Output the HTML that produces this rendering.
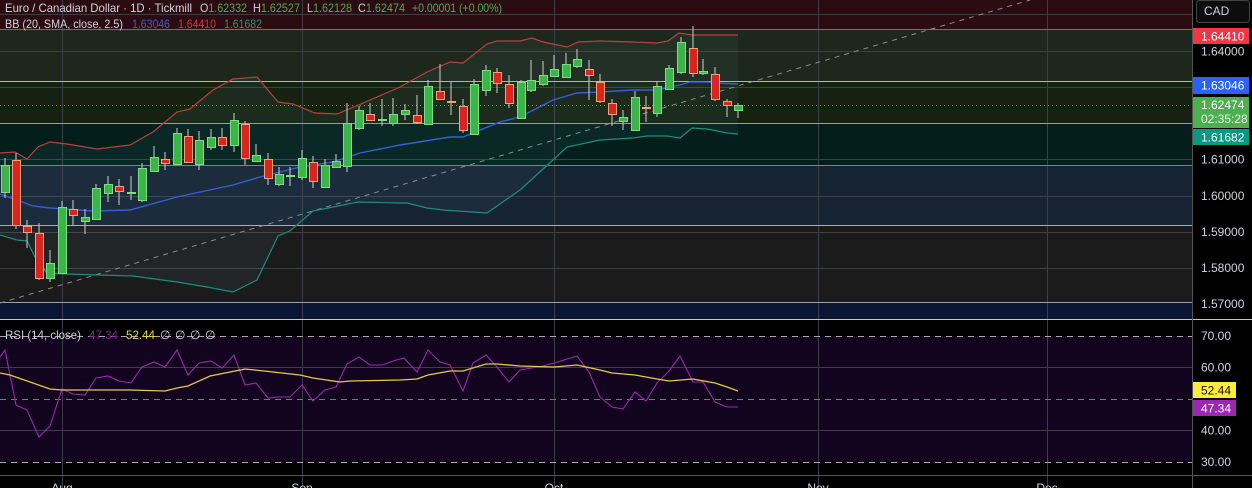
<!DOCTYPE html>
<html><head><meta charset="utf-8"><style>
html,body{margin:0;padding:0;background:#000;width:1252px;height:488px;overflow:hidden;font-family:"Liberation Sans",sans-serif}
svg{position:absolute;left:0;top:0}
</style></head><body>
<svg width="1252" height="488" viewBox="0 0 1252 488" xmlns="http://www.w3.org/2000/svg" font-family="Liberation Sans, sans-serif">
<rect x="0" y="0" width="1192" height="29" fill="#2a0c12"/>
<rect x="0" y="29" width="1192" height="52" fill="#1d271b"/>
<rect x="0" y="81" width="1192" height="42" fill="#162112"/>
<rect x="0" y="123" width="1192" height="42" fill="#031e1b"/>
<rect x="0" y="165" width="1192" height="60" fill="#162333"/>
<rect x="0" y="225" width="1192" height="77" fill="#1b1b1c"/>
<rect x="0" y="302" width="1192" height="17" fill="#0b1634"/>
<rect x="0" y="336" width="1192" height="126" fill="#12041e"/>
<g stroke="#3c3f46" stroke-width="1">
<line x1="0" y1="14.5" x2="1192" y2="14.5"/><line x1="0" y1="51.5" x2="1192" y2="51.5"/>
<line x1="0" y1="87.5" x2="1192" y2="87.5"/><line x1="0" y1="159.5" x2="1192" y2="159.5"/>
<line x1="0" y1="196.5" x2="1192" y2="196.5"/><line x1="0" y1="232.5" x2="1192" y2="232.5"/>
<line x1="0" y1="268.5" x2="1192" y2="268.5"/>
<line x1="62.5" y1="0" x2="62.5" y2="488"/><line x1="302.5" y1="0" x2="302.5" y2="488"/>
<line x1="554.5" y1="0" x2="554.5" y2="488"/><line x1="818.5" y1="0" x2="818.5" y2="488"/>
<line x1="1047.5" y1="0" x2="1047.5" y2="488"/>
<line x1="0" y1="367.5" x2="1192" y2="367.5"/><line x1="0" y1="430.5" x2="1192" y2="430.5"/>
</g>
<polygon fill="rgba(140,210,220,0.06)" points="0,153 15,152 27,159 38,147 50,142 67,144 97,149 130,145 153,132 177,112 190,109 213,90 233,79 257,77 278,102 293,104 315,113 337,114 370,100 400,87 427,72 450,62 463,63 487,44 497,41 520,41 532,38 543,42 567,47 578,42 600,41 633,42 657,43 668,41 679,33 692,35 738,35 738,134 727,133 707,129 692,128 680,138 667,136 647,136 633,138 600,140 567,147 553,160 520,190 487,213 443,210 427,208 407,203 400,203 358,202 313,211 290,231 278,236 257,280 233,292 207,287 177,282 133,276 67,274 47,273 35,257 27,241 17,240 0,235"/>
<line x1="0" y1="29.5" x2="1192" y2="29.5" stroke="#e0404a"/>
<line x1="0" y1="81.5" x2="1192" y2="81.5" stroke="#8fd17a"/>
<line x1="0" y1="123.5" x2="1192" y2="123.5" stroke="#6cc060"/>
<line x1="0" y1="165.5" x2="1192" y2="165.5" stroke="#2ea88f"/>
<line x1="0" y1="225.5" x2="1192" y2="225.5" stroke="#7fb6f0"/>
<line x1="0" y1="302.5" x2="1192" y2="302.5" stroke="#9aa2b8"/>
<line x1="0" y1="105.5" x2="1192" y2="105.5" stroke="#4caf50" stroke-dasharray="1,3"/>
<line x1="0" y1="303" x2="1030" y2="0" stroke="#8a8a8a" stroke-dasharray="5,5"/>
<polyline fill="none" stroke="#b8413f" stroke-width="1.2" points="0,153 15,152 27,159 38,147 50,142 67,144 97,149 130,145 153,132 177,112 190,109 213,90 233,79 257,77 278,102 293,104 315,113 337,114 370,100 400,87 427,72 450,62 463,63 487,44 497,41 520,41 532,38 543,42 567,47 578,42 600,41 633,42 657,43 668,41 679,33 692,35 738,35"/>
<polyline fill="none" stroke="#2f62d8" stroke-width="1.4" points="0,194 17,200 33,206 50,208 93,211 130,210 177,197 233,185 260,177 300,167 333,162 360,153 400,145 450,137 463,137 500,122 520,117 553,100 577,93 600,92 633,90 657,90 680,85 690,82 707,82 717,83 738,84"/>
<polyline fill="none" stroke="#1a8f7a" stroke-width="1.2" points="0,235 17,240 27,241 35,257 47,273 67,274 133,276 177,282 207,287 233,292 257,280 278,236 290,231 313,211 358,202 400,203 407,203 427,208 443,210 487,213 520,190 553,160 567,147 600,140 633,138 647,136 667,136 680,138 692,128 707,129 727,133 738,134"/>
<g stroke="#cfcfcf" stroke-width="1">
<line x1="5" y1="158" x2="5" y2="198"/><line x1="16" y1="153" x2="16" y2="229"/><line x1="27" y1="220" x2="27" y2="248"/><line x1="39" y1="223" x2="39" y2="280"/><line x1="50" y1="250" x2="50" y2="282"/><line x1="62" y1="201" x2="62" y2="273"/><line x1="73" y1="200" x2="73" y2="225"/><line x1="85" y1="209" x2="85" y2="234"/><line x1="96" y1="184" x2="96" y2="220"/><line x1="108" y1="176" x2="108" y2="202"/><line x1="119" y1="179" x2="119" y2="205"/><line x1="131" y1="176" x2="131" y2="200"/><line x1="142" y1="163" x2="142" y2="202"/><line x1="154" y1="146" x2="154" y2="172"/><line x1="165" y1="152" x2="165" y2="170"/><line x1="177" y1="128" x2="177" y2="164"/><line x1="188" y1="129" x2="188" y2="163"/><line x1="199" y1="131" x2="199" y2="170"/><line x1="211" y1="129" x2="211" y2="150"/><line x1="222" y1="128" x2="222" y2="150"/><line x1="234" y1="113" x2="234" y2="152"/><line x1="245" y1="121" x2="245" y2="165"/><line x1="256" y1="144" x2="256" y2="162"/><line x1="268" y1="153" x2="268" y2="185"/><line x1="279" y1="167" x2="279" y2="186"/><line x1="290" y1="167" x2="290" y2="186"/><line x1="302" y1="150" x2="302" y2="180"/><line x1="313" y1="156" x2="313" y2="188"/><line x1="325" y1="159" x2="325" y2="188"/><line x1="336" y1="154" x2="336" y2="168"/><line x1="347" y1="103" x2="347" y2="172"/><line x1="359" y1="106" x2="359" y2="130"/><line x1="370" y1="103" x2="370" y2="121"/><line x1="382" y1="99" x2="382" y2="126"/><line x1="393" y1="98" x2="393" y2="126"/>
<line x1="405" y1="104" x2="405" y2="120"/><line x1="417" y1="95" x2="417" y2="124"/><line x1="428" y1="80" x2="428" y2="125"/><line x1="440" y1="64" x2="440" y2="100"/><line x1="451" y1="82" x2="451" y2="115"/><line x1="463" y1="99" x2="463" y2="133"/><line x1="474" y1="79" x2="474" y2="135"/><line x1="486" y1="65" x2="486" y2="96"/><line x1="497" y1="68" x2="497" y2="93"/><line x1="509" y1="75" x2="509" y2="108"/><line x1="521" y1="80" x2="521" y2="119"/><line x1="531" y1="60" x2="531" y2="92"/><line x1="543" y1="61" x2="543" y2="86"/><line x1="554" y1="55" x2="554" y2="77"/><line x1="566" y1="53" x2="566" y2="78"/><line x1="577" y1="49" x2="577" y2="68"/><line x1="589" y1="60" x2="589" y2="100"/><line x1="600" y1="74" x2="600" y2="103"/><line x1="612" y1="99" x2="612" y2="126"/><line x1="623" y1="110" x2="623" y2="130"/><line x1="635" y1="91" x2="635" y2="131"/><line x1="646" y1="96" x2="646" y2="122"/><line x1="657" y1="82" x2="657" y2="117"/><line x1="669" y1="65" x2="669" y2="90"/><line x1="681" y1="37" x2="681" y2="74"/><line x1="693" y1="26" x2="693" y2="77"/><line x1="703" y1="59" x2="703" y2="75"/><line x1="715" y1="67" x2="715" y2="101"/><line x1="727" y1="99" x2="727" y2="117"/><line x1="738" y1="103" x2="738" y2="118"/>
</g>
<g stroke-width="1">
<g fill="#3bb54a" stroke="#7fdc86">
<rect x="1.5" y="165.5" width="8" height="27"/><rect x="46.5" y="263.5" width="8" height="15"/><rect x="58.5" y="207.5" width="8" height="66"/><rect x="81.5" y="217.5" width="8" height="4"/><rect x="92.5" y="188.5" width="8" height="31"/><rect x="104.5" y="184.5" width="8" height="9"/><rect x="127.5" y="192.5" width="8" height="1"/><rect x="138.5" y="168.5" width="8" height="32"/><rect x="150.5" y="157.5" width="8" height="14"/><rect x="173.5" y="133.5" width="8" height="31"/><rect x="195.5" y="140.5" width="8" height="24"/><rect x="207.5" y="137.5" width="8" height="10"/><rect x="230.5" y="120.5" width="8" height="25"/><rect x="252.5" y="155.5" width="8" height="6"/><rect x="275.5" y="174.5" width="8" height="10"/><rect x="286.5" y="175.5" width="8" height="1"/><rect x="298.5" y="158.5" width="8" height="19"/><rect x="321.5" y="165.5" width="8" height="22"/><rect x="332.5" y="161.5" width="8" height="6"/><rect x="343.5" y="123.5" width="8" height="43"/><rect x="355.5" y="110.5" width="8" height="18"/><rect x="378.5" y="119.5" width="8" height="1"/><rect x="389.5" y="114.5" width="8" height="9"/>
<rect x="401.5" y="110.5" width="8" height="4"/><rect x="424.5" y="86.5" width="8" height="38"/><rect x="470.5" y="84.5" width="8" height="50"/><rect x="482.5" y="70.5" width="8" height="20"/><rect x="517.5" y="82.5" width="8" height="36"/><rect x="527.5" y="80.5" width="8" height="10"/><rect x="539.5" y="75.5" width="8" height="9"/><rect x="550.5" y="69.5" width="8" height="7"/><rect x="562.5" y="64.5" width="8" height="13"/><rect x="573.5" y="59.5" width="8" height="7"/><rect x="619.5" y="117.5" width="8" height="4"/><rect x="631.5" y="97.5" width="8" height="33"/><rect x="653.5" y="86.5" width="8" height="27"/><rect x="665.5" y="68.5" width="8" height="21"/><rect x="677.5" y="42.5" width="8" height="30"/><rect x="699.5" y="71.5" width="8" height="2"/><rect x="734.5" y="105.5" width="8" height="5"/>
</g>
<g fill="#d9261c" stroke="#f5a27c">
<rect x="12.5" y="160.5" width="8" height="65"/><rect x="23.5" y="226.5" width="8" height="6"/><rect x="35.5" y="233.5" width="8" height="45"/><rect x="69.5" y="209.5" width="8" height="6"/><rect x="115.5" y="186.5" width="8" height="5"/><rect x="161.5" y="159.5" width="8" height="4"/><rect x="184.5" y="136.5" width="8" height="26"/><rect x="218.5" y="137.5" width="8" height="8"/><rect x="241.5" y="124.5" width="8" height="34"/><rect x="264.5" y="159.5" width="8" height="19"/><rect x="309.5" y="162.5" width="8" height="19"/><rect x="366.5" y="114.5" width="8" height="6"/>
<rect x="413.5" y="115.5" width="8" height="7"/><rect x="436.5" y="91.5" width="8" height="8"/><rect x="447.5" y="101.5" width="8" height="1"/><rect x="459.5" y="106.5" width="8" height="24"/><rect x="493.5" y="72.5" width="8" height="11"/><rect x="505.5" y="84.5" width="8" height="19"/><rect x="585.5" y="69.5" width="8" height="6"/><rect x="596.5" y="82.5" width="8" height="19"/><rect x="608.5" y="103.5" width="8" height="11"/><rect x="642.5" y="107.5" width="8" height="1"/><rect x="689.5" y="48.5" width="8" height="25"/><rect x="711.5" y="74.5" width="8" height="25"/><rect x="723.5" y="101.5" width="8" height="4"/>
</g>
</g>
<line x1="0" y1="319.5" x2="1252" y2="319.5" stroke="#c8c8c8"/>
<line x1="0" y1="475.5" x2="1252" y2="475.5" stroke="#555"/>
<line x1="1192.5" y1="0" x2="1192.5" y2="488" stroke="#555"/>
<g stroke="#aaa" stroke-dasharray="6,5" stroke-width="1">
<line x1="0" y1="336.5" x2="1192" y2="336.5"/><line x1="0" y1="399.5" x2="1192" y2="399.5" stroke="#777"/><line x1="0" y1="462.5" x2="1192" y2="462.5"/>
</g>
<polyline fill="none" stroke="#9c27b0" stroke-width="1.1" points="0,357 5,350 16,405 27,410 39,437 50,426 62,389 73,394 85,395 96,378 108,376 119,381 131,383 142,367 154,362 165,367 177,350 188,375 199,363 211,361 222,368 234,355 245,385 256,383 268,398 279,397 290,397 302,385 313,401 325,390 336,387 347,364 359,357 370,365 382,365 393,361 404,358 417,372 428,350 440,362 450,365 463,391 473,363 486,355 497,367 509,382 520,370 532,368 543,366 554,363 577,356 589,372 600,397 612,407 623,409 635,392 646,401 657,383 669,371 680,356 693,382 703,382 715,402 727,407 738,407"/>
<polyline fill="none" stroke="#e6c84a" stroke-width="1.3" points="0,373 10,375 50,389 62,390 90,390 130,390 165,391 177,388 188,386 210,376 235,371 245,369 255,370 300,375 313,378 340,382 350,381 400,380 417,379 428,375 450,371 463,371 486,364 497,364 520,366 554,367 577,365 600,370 612,373 635,375 657,379 669,381 693,379 715,383 727,387 738,391"/>
<g font-size="12" lengthAdjust="spacingAndGlyphs">
<text x="5" y="12" fill="#d1d4dc" textLength="187" lengthAdjust="spacingAndGlyphs">Euro / Canadian Dollar · 1D · Tickmill</text>
<text x="200" y="12" fill="#d1d4dc" textLength="47" lengthAdjust="spacingAndGlyphs">O<tspan fill="#4caf50">1.62332</tspan></text>
<text x="253" y="12" fill="#d1d4dc" textLength="47" lengthAdjust="spacingAndGlyphs">H<tspan fill="#4caf50">1.62527</tspan></text>
<text x="307" y="12" fill="#d1d4dc" textLength="45" lengthAdjust="spacingAndGlyphs">L<tspan fill="#4caf50">1.62128</tspan></text>
<text x="358" y="12" fill="#d1d4dc" textLength="47" lengthAdjust="spacingAndGlyphs">C<tspan fill="#4caf50">1.62474</tspan></text>
<text x="412" y="12" fill="#4caf50" textLength="90" lengthAdjust="spacingAndGlyphs">+0.00001 (+0.00%)</text>
<text x="5" y="28" fill="#d1d4dc" textLength="118" lengthAdjust="spacingAndGlyphs">BB (20, SMA, close, 2.5)</text>
<text x="132" y="28" fill="#3b5fd0" textLength="38" lengthAdjust="spacingAndGlyphs">1.63046</text>
<text x="178" y="28" fill="#d9343c" textLength="38" lengthAdjust="spacingAndGlyphs">1.64410</text>
<text x="224" y="28" fill="#1a9a85" textLength="38" lengthAdjust="spacingAndGlyphs">1.61682</text>
<text x="5" y="339" fill="#d1d4dc" textLength="76" lengthAdjust="spacingAndGlyphs">RSI (14, close)</text>
<text x="89" y="339" fill="#7b2590" textLength="29" lengthAdjust="spacingAndGlyphs">47.34</text>
<text x="126" y="339" fill="#f0d84a" textLength="29" lengthAdjust="spacingAndGlyphs">52.44</text>
<text x="160" y="339" fill="#d1d4dc">∅</text><text x="175" y="339" fill="#d1d4dc">∅</text><text x="190" y="339" fill="#d1d4dc">∅</text><text x="205" y="339" fill="#d1d4dc">∅</text>
</g>
<rect x="1196.5" y="0.5" width="53" height="22" rx="3" fill="#0d0d0d" stroke="#444"/>
<text x="1204" y="15" font-size="12" fill="#d1d4dc">CAD</text>
<g font-size="12" fill="#d1d4dc">
<rect x="1193" y="28" width="56" height="16" fill="#f23645"/><text x="1201" y="40.5" fill="#fff">1.64410</text>
<text x="1201" y="55.5">1.64000</text>
<rect x="1193" y="77" width="56" height="17" fill="#2962ff"/><text x="1201" y="89.5" fill="#fff">1.63046</text>
<rect x="1193" y="97" width="56" height="31" fill="#4caf50"/><text x="1201" y="109" fill="#fff">1.62474</text><text x="1201" y="123" fill="#e8f5e8">02:35:28</text>
<rect x="1193" y="129" width="56" height="16" fill="#089981"/><text x="1201" y="141.5" fill="#fff">1.61682</text>
<text x="1201" y="163.5">1.61000</text>
<text x="1201" y="200">1.60000</text>
<text x="1201" y="236">1.59000</text>
<text x="1201" y="272">1.58000</text>
<text x="1201" y="308">1.57000</text>
<text x="1201" y="340">70.00</text>
<text x="1201" y="371.5">60.00</text>
<rect x="1193" y="382" width="43" height="16" fill="#ffeb3b"/><text x="1201" y="394.5" fill="#111">52.44</text>
<rect x="1193" y="400" width="43" height="16" fill="#9c27b0"/><text x="1201" y="412.5" fill="#fff">47.34</text>
<text x="1201" y="434.5">40.00</text>
<text x="1201" y="466">30.00</text>
</g>
<g font-size="12" fill="#d1d4dc" text-anchor="middle">
<text x="62" y="492">Aug</text><text x="302" y="492">Sep</text><text x="554" y="492">Oct</text><text x="818" y="492">Nov</text><text x="1047" y="492">Dec</text>
</g>
</svg>
</body></html>
